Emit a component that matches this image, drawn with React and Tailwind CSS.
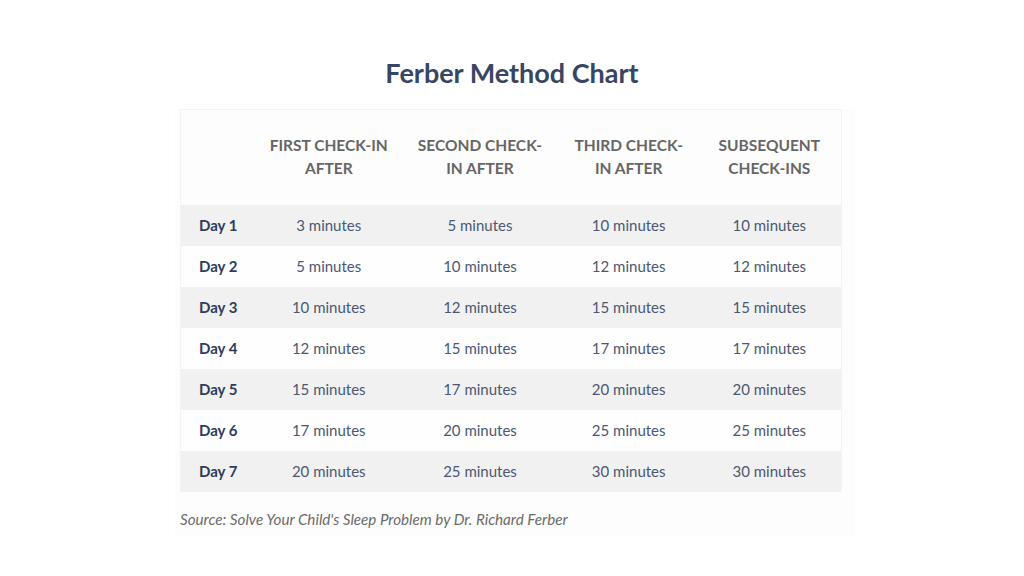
import React from "react";

const rows = [
  ["Day 1", "3 minutes", "5 minutes", "10 minutes", "10 minutes"],
  ["Day 2", "5 minutes", "10 minutes", "12 minutes", "12 minutes"],
  ["Day 3", "10 minutes", "12 minutes", "15 minutes", "15 minutes"],
  ["Day 4", "12 minutes", "15 minutes", "17 minutes", "17 minutes"],
  ["Day 5", "15 minutes", "17 minutes", "20 minutes", "20 minutes"],
  ["Day 6", "17 minutes", "20 minutes", "25 minutes", "25 minutes"],
  ["Day 7", "20 minutes", "25 minutes", "30 minutes", "30 minutes"],
];

const App = () => {
  return (
    <div className="w-[1024px] h-[576px] bg-white flex flex-col items-center font-['Lato',sans-serif]">
      <h1 className="mt-[55px] h-[36px] text-[27px] leading-[36px] font-bold text-[#394662]">
        Ferber Method Chart
      </h1>

      <div className="mt-[18px] w-[680px] bg-[#fdfdfd] pb-[8px] pl-[5px] pr-[13px] ml-[6px]">
        <table className="w-[662px] border border-[#f3f3f3] border-collapse">
          <thead>
            <tr className="h-[95px] bg-[#fdfdfd]">
              <th className="w-[77px]"></th>
              {[
                ["FIRST CHECK-IN", "AFTER"],
                ["SECOND CHECK-", "IN AFTER"],
                ["THIRD CHECK-", "IN AFTER"],
                ["SUBSEQUENT", "CHECK-INS"],
              ].map((h, i) => (
                <th
                  key={i}
                  className={`${["w-[143px]", "w-[160px]", "w-[138px]", "w-[144px]"][i]} text-[15.5px] leading-[23px] font-bold text-[#666666] text-center`}
                >
                  {h[0]}
                  <br />
                  {h[1]}
                </th>
              ))}
            </tr>
          </thead>
          <tbody>
            {rows.map((r, i) => (
              <tr
                key={i}
                className={`h-[41px] ${i % 2 === 0 ? "bg-[#f1f1f1]" : "bg-[#fefefe]"}`}
              >
                <td className="pl-[18px] text-[15px] font-bold text-[#2e3d5b]">{r[0]}</td>
                {r.slice(1).map((c, j) => (
                  <td key={j} className="text-center text-[15px] text-[#4b5873]">
                    {c}
                  </td>
                ))}
              </tr>
            ))}
          </tbody>
        </table>
        <p className="mt-[17px] text-[15.2px] italic text-[#6b6b6b] leading-[20px]">
          Source: Solve Your Child's Sleep Problem by Dr. Richard Ferber
        </p>
      </div>
    </div>
  );
};

export default App;
